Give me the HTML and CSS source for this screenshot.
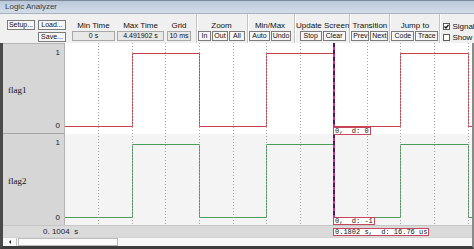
FILE: index.html
```html
<!DOCTYPE html>
<html lang="en">
<head>
  <meta charset="UTF-8">
  <title>Logic Analyzer</title>
  <link rel="stylesheet" href="styles.css">
</head>
<body>
  <div class="window">
    <div class="titlebar">Logic Analyzer</div>

    <div class="toolbar">
      <div class="files">
        <button class="btn">Setup...</button>
        <button class="btn">Load...</button>
        <span></span>
        <button class="btn">Save...</button>
      </div>

      <div class="group min-time">
        <div class="label">Min Time</div>
        <span class="value w-min">0 s</span>
      </div>
      <div class="group max-time">
        <div class="label">Max Time</div>
        <span class="value w-max">4.491902 s</span>
      </div>
      <div class="group grid-group">
        <div class="label">Grid</div>
        <span class="value w-grid">10 ms</span>
      </div>

      <div class="sep sep-a"></div>
      <div class="group">
        <div class="label">Zoom</div>
        <div class="controls">
          <button class="btn w-in">In</button>
          <button class="btn w-out">Out</button>
          <button class="btn w-all">All</button>
        </div>
      </div>

      <div class="sep sep-b"></div>
      <div class="group">
        <div class="label">Min/Max</div>
        <div class="controls">
          <button class="btn w-auto">Auto</button>
          <button class="btn w-undo">Undo</button>
        </div>
      </div>

      <div class="sep sep-c"></div>
      <div class="group">
        <div class="label">Update Screen</div>
        <div class="controls">
          <button class="btn w-stop">Stop</button>
          <button class="btn w-clear">Clear</button>
        </div>
      </div>

      <div class="sep"></div>
      <div class="group">
        <div class="label">Transition</div>
        <div class="controls">
          <button class="btn w-prev">Prev</button>
          <button class="btn w-next">Next</button>
        </div>
      </div>

      <div class="sep sep-d"></div>
      <div class="group">
        <div class="label">Jump to</div>
        <div class="controls">
          <button class="btn w-code">Code</button>
          <button class="btn w-trace">Trace</button>
        </div>
      </div>

      <div class="sep sep-d"></div>
      <div class="checks">
        <label class="check-row">
          <span class="checkbox"><svg width="5" height="5" viewBox="0 0 5 5"><polyline points="0.5,2.5 2,4 4.5,0.8" fill="none" stroke="#111" stroke-width="1.3"/></svg></span>
          Signal Info
        </label>
        <label class="check-row">
          <span class="checkbox"></span>
          Show Cycles
        </label>
      </div>
    </div>

    <div class="plot">
      <div class="signals">
        <div class="sig-label first">
          <span class="level">1</span>
          <span class="name">flag1</span>
          <span class="level">0</span>
        </div>
        <div class="sig-label">
          <span class="level">1</span>
          <span class="name">flag2</span>
          <span class="level">0</span>
        </div>

        <div class="canvas">
          <svg width="407" height="182" viewBox="0 0 407 182">
            <rect x="0" y="91" width="407" height="91" fill="#f4f4f4"/>
            <!-- signals -->
            <polyline fill="none" stroke="#c9404f" points="0,83.5 67.5,83.5 67.5,10.5 134.5,10.5 134.5,83.5 201.5,83.5 201.5,10.5 268.5,10.5 268.5,83.5 335.5,83.5 335.5,10.5 403.5,10.5 403.5,83.5 407,83.5"/>
            <polyline fill="none" stroke="#4e9a5c" points="0,174.5 67.5,174.5 67.5,101.5 134.5,101.5 134.5,174.5 201.5,174.5 201.5,101.5 268.5,101.5 268.5,174.5 335.5,174.5 335.5,101.5 403.5,101.5 403.5,174.5 407,174.5"/>
            <!-- grid -->
            <g stroke="#a4a4a4" stroke-dasharray="1 2">
              <line x1="33.5" y1="0" x2="33.5" y2="182"/>
              <line x1="67.5" y1="0" x2="67.5" y2="182"/>
              <line x1="100.5" y1="0" x2="100.5" y2="182"/>
              <line x1="134.5" y1="0" x2="134.5" y2="182"/>
              <line x1="168.5" y1="0" x2="168.5" y2="182"/>
              <line x1="201.5" y1="0" x2="201.5" y2="182"/>
              <line x1="235.5" y1="0" x2="235.5" y2="182"/>
              <line x1="302.5" y1="0" x2="302.5" y2="182"/>
              <line x1="335.5" y1="0" x2="335.5" y2="182"/>
              <line x1="369.5" y1="0" x2="369.5" y2="182"/>
              <line x1="403.5" y1="0" x2="403.5" y2="182"/>
            </g>
            <!-- cursor -->
            <line x1="269" y1="0" x2="269" y2="182" stroke="#c2368f" stroke-width="2"/>
            <line x1="269" y1="0" x2="269" y2="182" stroke="#4a1a5a" stroke-width="2" stroke-dasharray="4 3"/>
          </svg>
          <span class="readout r-flag1">0,  d: 0</span>
          <span class="readout r-flag2">0,  d: -1</span>
        </div>
      </div>

      <div class="axis">
        <span class="axis-time">0. 1004  s</span>
        <span class="readout">0.1802 s,  d: 16.76 us</span>
      </div>

      <div class="scrollbar">
        <span class="arrow"><span class="tri"></span></span>
        <span class="thumb"></span>
      </div>
    </div>
  </div>
</body>
</html>
```

FILE: styles.css
```css
* {
  box-sizing: border-box;
}
body {
  margin: 0;
  background: #fff;
  font-family: 'Liberation Sans', Arial, sans-serif;
}
.window {
  width: 474px;
  height: 249px;
  display: flex;
  flex-direction: column;
  overflow: hidden;
  background: #f0f0f0;
}
.titlebar {
  height: 14px;
  flex: none;
  padding-left: 5px;
  background: linear-gradient(#b9c8d9, #d3dde8);
  border-top: 1px solid #7d8a9a;
  border-bottom: 1px solid #a7b2be;
  color: #34404e;
  font-size: 8px;
  line-height: 12px;
}

/* toolbar */
.toolbar {
  height: 29px;
  flex: none;
  display: flex;
  align-items: stretch;
  padding-left: 7px;
  overflow: hidden;
  white-space: nowrap;
  font-size: 8px;
  color: #111;
}
.files {
  display: grid;
  grid-template-columns: 28px 28px;
  grid-template-rows: 10px 10px;
  column-gap: 3px;
  row-gap: 2px;
  padding-top: 6px;
}
.group {
  display: flex;
  flex-direction: column;
  align-items: center;
  padding-top: 6px;
}
.min-time { margin-left: 6px; }
.max-time { margin-left: 2px; }
.grid-group { margin-left: 3px; }
.label {
  height: 11px;
  line-height: 11px;
}
.controls {
  display: flex;
  gap: 1px;
}
.btn {
  height: 10px;
  padding: 0;
  margin: 0;
  border: 1px solid #7b7b7b;
  background: #f6f6f6;
  font-family: inherit;
  font-size: 7px;
  line-height: 8px;
  color: #111;
  text-align: center;
}
.value {
  display: block;
  height: 10px;
  border: 1px solid #a8a8a8;
  background: #e8e8e8;
  font-size: 7px;
  line-height: 8px;
  text-align: center;
}
.w-min { width: 43px; }
.w-max { width: 47px; }
.w-grid { width: 24px; }
.w-in { width: 13px; }
.w-out, .w-all { width: 16px; }
.w-auto { width: 21px; }
.w-undo { width: 20px; }
.w-stop { width: 22px; }
.w-clear { width: 23px; }
.w-prev, .w-next { width: 18px; }
.w-code { width: 23px; }
.w-trace { width: 23px; }

.sep {
  width: 2px;
  border-left: 1px solid #c4c4c4;
  border-right: 1px solid #fff;
}
.sep-a { margin: 0 0 0 5px; }
.sep-b { margin-left: 2px; }
.sep-c { margin-left: 3px; }
.sep-d { margin-left: 1px; }

.checks {
  display: flex;
  flex-direction: column;
  gap: 3px;
  margin-left: 2px;
  padding-top: 8px;
}
.check-row {
  display: flex;
  align-items: center;
  gap: 2px;
  height: 8px;
  font-size: 8px;
}
.checkbox {
  width: 7px;
  height: 7px;
  display: flex;
  align-items: center;
  justify-content: center;
  border: 1px solid #5a5a5a;
  background: #fff;
}

/* plot */
.plot {
  flex: 1;
  display: flex;
  flex-direction: column;
  border-left: 3px solid #4a4a4a;
  border-right: 2px solid #8a8a8a;
  border-bottom: 3px solid #3c3c3c;
}
.signals {
  display: grid;
  grid-template-columns: 62px 407px;
  grid-template-rows: 91px 91px;
}
.sig-label {
  display: flex;
  flex-direction: column;
  justify-content: space-between;
  padding: 4px 4px 2px 5px;
  background: #d6d6d6;
  border-right: 1px solid #b4b4b4;
  font-size: 8px;
  line-height: 10px;
  color: #222;
}
.sig-label.first {
  border-top: 1px solid #b4b4b4;
  border-bottom: 1px solid #a4a4a4;
}
.level {
  align-self: flex-end;
}
.name {
  font-family: 'Liberation Serif', 'Times New Roman', serif;
  font-size: 9px;
  color: #111;
}
.canvas {
  grid-column: 2;
  grid-row: 1 / 3;
  position: relative;
  background: #fff;
}
.canvas svg {
  display: block;
}
.readout {
  height: 8px;
  padding: 0 1px;
  border: 1px solid #c8455e;
  background: #fff;
  font-family: 'Liberation Mono', 'Courier New', monospace;
  font-size: 7px;
  line-height: 6px;
  white-space: pre;
  color: #111;
}
.canvas .readout {
  position: absolute;
  left: 268px;
}
.r-flag1 { top: 84px; }
.r-flag2 { top: 174px; }

.axis {
  height: 12px;
  display: flex;
  align-items: center;
  background: #dadada;
  border-top: 1px solid #c6c6c6;
}
.axis-time {
  width: 330px;
  padding-left: 40px;
  font-size: 8px;
  white-space: pre;
  color: #222;
}
.scrollbar {
  height: 9px;
  display: flex;
  background: #f8f8f8;
  border-top: 1px solid #d4d4d4;
}
.arrow {
  width: 14px;
  display: flex;
  align-items: center;
  justify-content: center;
  border-right: 1px solid #c4c4c4;
}
.tri {
  width: 0;
  height: 0;
  border-top: 2px solid transparent;
  border-bottom: 2px solid transparent;
  border-right: 2px solid #222;
}
.thumb {
  width: 100px;
  margin-left: 1px;
  border: 1px solid #bcbcbc;
  background: #fbfbfb;
}
```
